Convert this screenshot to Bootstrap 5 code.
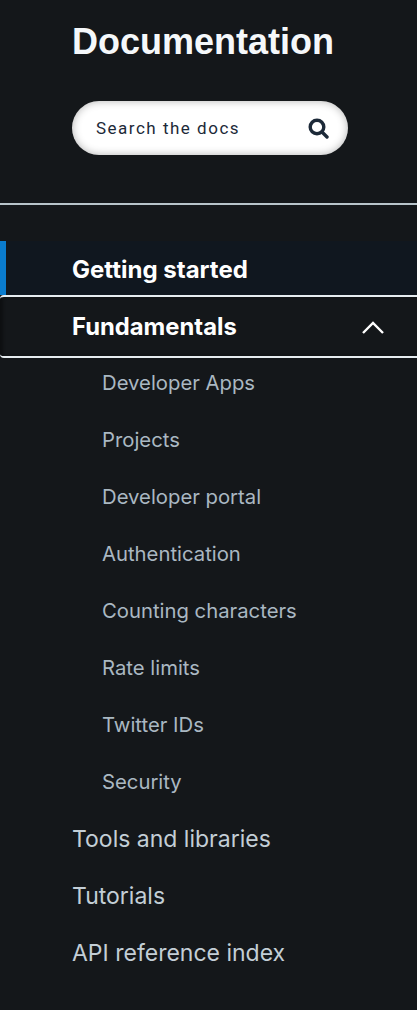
<!DOCTYPE html>
<html lang="en">
<head>
<meta charset="utf-8">
<title>Documentation</title>
<link href="https://cdn.jsdelivr.net/npm/bootstrap@5.3.0/dist/css/bootstrap.min.css" rel="stylesheet">
<style>
html,body{background:#14171a;height:1010px;overflow:hidden}
body{font-family:Inter,"Liberation Sans",sans-serif}
.doc-title{font-family:"Liberation Sans",sans-serif;font-size:36px;font-weight:700;line-height:40px;color:#f5f8fa;margin:0;padding:22px 0 0 72px}
.search-wrap{padding:39px 69px 48px 72px}
.search-pill{height:54px;border-radius:27px;background:#fff;box-shadow:inset 0 0 9px rgba(0,0,0,.3);padding:0 19px 0 24px}
.search-pill span{font-family:Roboto,sans-serif;font-size:17px;letter-spacing:1.5px;color:#1c2938;padding-top:1px}
.side-rule{border:0;border-top:2px solid #b8c4ca;opacity:1;margin:0}
.nav-list{padding-top:36px}
.item{display:flex;align-items:center;height:57px;padding-left:72px;font-size:23px;color:#c3ced6;text-decoration:none}
.item.current{position:relative;height:54px;padding-top:3px;font-size:24px;font-weight:700;color:#fff;background:#10171f}
.item.current::before{content:"";position:absolute;left:0;top:0;bottom:0;width:6px;background:#0a7cce}
.item.open{height:63px;margin-bottom:-3px;position:relative;font-size:23.8px;font-weight:700;color:#fff;border-top:2px solid #e6ecf0;border-bottom:2px solid #e6ecf0;border-radius:4px 0 0 4px;background:#14171a;box-shadow:inset 3px 0 3px rgba(0,0,0,.35)}
.item.open svg{margin-left:auto;margin-right:32px}
.item.sub{padding-left:102px;font-size:20.3px;color:#aab8c2}
</style>
</head>
<body>
<h1 class="doc-title">Documentation</h1>
<div class="search-wrap">
  <div class="search-pill d-flex align-items-center justify-content-between">
    <span>Search the docs</span>
    <svg width="21" height="21" viewBox="0 0 21 21" fill="none" stroke="#1c2938" stroke-width="3.4" stroke-linecap="round"><circle cx="9" cy="9" r="6.8"/><path d="M14 14l5 5"/></svg>
  </div>
</div>
<hr class="side-rule">
<nav class="nav-list">
  <a class="item current" href="#">Getting started</a>
  <a class="item open" href="#">Fundamentals
    <svg width="24" height="14" viewBox="0 0 24 14" fill="none" stroke="#fff" stroke-width="2.4"><path d="M2 13L12 3l10 10"/></svg>
  </a>
  <a class="item sub" href="#">Developer Apps</a>
  <a class="item sub" href="#">Projects</a>
  <a class="item sub" href="#">Developer portal</a>
  <a class="item sub" href="#">Authentication</a>
  <a class="item sub" href="#">Counting characters</a>
  <a class="item sub" href="#">Rate limits</a>
  <a class="item sub" href="#">Twitter IDs</a>
  <a class="item sub" href="#">Security</a>
  <a class="item" href="#">Tools and libraries</a>
  <a class="item" href="#">Tutorials</a>
  <a class="item" href="#">API reference index</a>
</nav>
<script src="https://cdn.jsdelivr.net/npm/bootstrap@5.3.0/dist/js/bootstrap.bundle.min.js"></script>
</body>
</html>
